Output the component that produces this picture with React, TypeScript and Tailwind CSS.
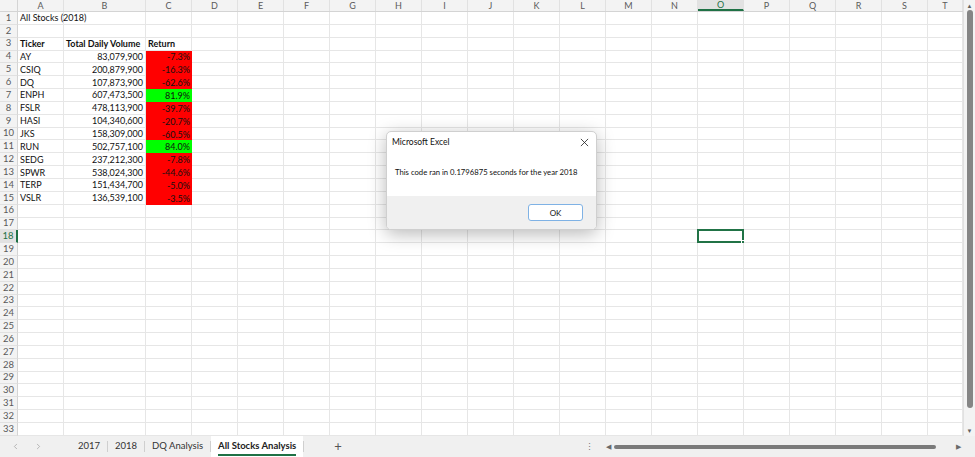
import React from 'react';
import { ChevronLeft, ChevronRight } from 'lucide-react';

const COLS = ['A', 'B', 'C', 'D', 'E', 'F', 'G', 'H', 'I', 'J', 'K', 'L', 'M', 'N', 'O', 'P', 'Q', 'R', 'S', 'T'];

const colWidth = (c: string) => {
  if (c === 'B') return 'w-[82px]';
  if (c === 'T') return 'w-[35px]';
  return 'w-[46px]';
};

type Stock = { ticker: string; volume: string; ret: string; up: boolean };

const STOCKS: Stock[] = [
  { ticker: 'AY', volume: '83,079,900', ret: '-7.3%', up: false },
  { ticker: 'CSIQ', volume: '200,879,900', ret: '-16.3%', up: false },
  { ticker: 'DQ', volume: '107,873,900', ret: '-62.6%', up: false },
  { ticker: 'ENPH', volume: '607,473,500', ret: '81.9%', up: true },
  { ticker: 'FSLR', volume: '478,113,900', ret: '-39.7%', up: false },
  { ticker: 'HASI', volume: '104,340,600', ret: '-20.7%', up: false },
  { ticker: 'JKS', volume: '158,309,000', ret: '-60.5%', up: false },
  { ticker: 'RUN', volume: '502,757,100', ret: '84.0%', up: true },
  { ticker: 'SEDG', volume: '237,212,300', ret: '-7.8%', up: false },
  { ticker: 'SPWR', volume: '538,024,300', ret: '-44.6%', up: false },
  { ticker: 'TERP', volume: '151,434,700', ret: '-5.0%', up: false },
  { ticker: 'VSLR', volume: '136,539,100', ret: '-3.5%', up: false },
];

const ROWS = Array.from({ length: 33 }, (_, i) => i + 1);

function cellContent(row: number, col: string) {
  if (row === 1 && col === 'A') return { text: 'All Stocks (2018)', cls: 'overflow-visible whitespace-nowrap' };
  if (row === 3) {
    if (col === 'A') return { text: 'Ticker', cls: 'font-bold' };
    if (col === 'B') return { text: 'Total Daily Volume', cls: 'font-bold whitespace-nowrap' };
    if (col === 'C') return { text: 'Return', cls: 'font-bold' };
  }
  const s = STOCKS[row - 4];
  if (s) {
    if (col === 'A') return { text: s.ticker, cls: '' };
    if (col === 'B') return { text: s.volume, cls: 'justify-end' };
    if (col === 'C')
      return {
        text: s.ret,
        cls: s.up ? 'justify-end bg-[#00ff00]' : 'justify-end bg-[#ff0000]',
        fill: true,
      };
  }
  return null;
}

const ColumnHeader = () => (
  <div className="flex h-[12px] border-b border-[#d4d4d4] bg-[#f3f3f3]">
    <div className="w-[18px] shrink-0 border-r border-[#d4d4d4]" />
    {COLS.map((c) => (
      <div
        key={c}
        className={`${colWidth(c)} shrink-0 flex items-center justify-center border-r border-[#e1e1e1] text-[9px] ${
          c === 'O' ? 'bg-[#e2e2e2] text-[#1f7145] border-b-2 border-b-[#1f7145]' : 'text-[#5a5a5a]'
        }`}
      >
        {c}
      </div>
    ))}
  </div>
);

const Row = ({ row }: { row: number }) => (
  <div className="flex h-[12.85px]">
    <div
      className={`w-[18px] shrink-0 flex items-center justify-center text-[9.5px] border-b border-[#e1e1e1] ${
        row === 18
          ? 'bg-[#e2e2e2] text-[#1f7145] border-r-2 border-r-[#1f7145]'
          : 'bg-[#f3f3f3] text-[#5a5a5a] border-r border-r-[#d4d4d4]'
      }`}
    >
      {row}
    </div>
    {COLS.map((c) => {
      const content = cellContent(row, c);
      const fill = content && 'fill' in content;
      return (
        <div
          key={c}
          className={`${colWidth(c)} shrink-0 relative flex items-center px-[2px] text-[9px] leading-none text-[#111] ${
            fill ? '' : 'border-r border-[#e6e6e6] border-b border-b-[#e6e6e6]'
          } ${content?.cls ?? ''}`}
        >
          {content?.text}
          {row === 18 && c === 'O' && (
            <div className="absolute -left-px -top-px w-[47px] h-[14px] border-2 border-[#217346]">
              <div className="absolute -right-[3px] -bottom-[3px] w-[4px] h-[4px] bg-[#217346] border border-white" />
            </div>
          )}
        </div>
      );
    })}
  </div>
);

const VerticalScrollbar = () => (
  <div className="w-[12px] shrink-0 flex flex-col items-center bg-[#f3f3f3] border-l border-[#e1e1e1]">
    <div className="h-[10px] flex items-center text-[6px] text-[#606060]">▲</div>
    <div className="w-[6px] h-[398px] rounded-full bg-[#858585]" />
    <div className="flex-1" />
    <div className="h-[12px] flex items-center text-[6px] text-[#606060]">▼</div>
  </div>
);

const Tab = ({ label, active }: { label: string; active?: boolean }) => (
  <div
    className={`h-full flex items-center px-[7px] text-[9.5px] ${
      active ? 'bg-white font-bold text-[#222]' : 'text-[#333]'
    }`}
  >
    <span className={active ? 'border-b-2 border-[#1f7145] pb-[1px] mt-[2px]' : ''}>{label}</span>
  </div>
);

const Sep = () => <div className="w-px h-[11px] bg-[#cfcfcf]" />;

const TabBar = () => (
  <div className="h-[21px] flex items-center bg-[#f0f0f0] text-[#333]">
    <div className="w-[71px] flex items-center gap-[14px] pl-[11px] text-[#909090]">
      <ChevronLeft size={9} strokeWidth={1.6} />
      <ChevronRight size={9} strokeWidth={1.6} />
    </div>
    <div className="h-full flex items-center">
      <Tab label="2017" />
      <Sep />
      <Tab label="2018" />
      <Sep />
      <Tab label="DQ Analysis" />
      <Sep />
      <Tab label="All Stocks Analysis" active />
      <Sep />
    </div>
    <div className="ml-[30px] text-[13px] text-[#555] leading-none">+</div>
    <div className="flex-1" />
    <div className="text-[9px] text-[#777] mr-[12px]">⋮</div>
    <div className="text-[7px] text-[#6a6a6a] mr-[3px]">◀</div>
    <div className="w-[322px] h-[4px] rounded-full bg-[#7a7a7a]" />
    <div className="w-[20px]" />
    <div className="text-[7px] text-[#6a6a6a] mr-[14px]">▶</div>
  </div>
);

const Dialog = () => (
  <div className="absolute left-[386px] top-[131px] w-[211px] h-[99px] flex flex-col bg-white rounded-[5px] border border-[#cfcfcf] shadow-[0_4px_18px_rgba(0,0,0,0.28)] overflow-hidden">
    <div className="flex items-center justify-between h-[18px] pl-[5px] pr-[6px] mt-[1px]">
      <span className="text-[8.5px] text-[#111]">Microsoft Excel</span>
      <svg width="9" height="9" viewBox="0 0 10 10" className="mr-[1px]">
        <path d="M1 1L9 9M9 1L1 9" stroke="#222" strokeWidth="0.9" fill="none" />
      </svg>
    </div>
    <div className="flex-1 flex items-center pl-[8px] pb-[2px] text-[7.7px] text-[#111]">
      This code ran in 0.1796875 seconds for the year 2018
    </div>
    <div className="h-[33px] bg-[#f0f0f0] flex items-center justify-end pr-[13px]">
      <div className="w-[55px] h-[17px] flex items-center justify-center bg-white border border-[#7fb2e5] rounded-[3px] text-[8px] text-[#111]">
        OK
      </div>
    </div>
  </div>
);

export default function App() {
  return (
    <div
      className="relative w-[975px] h-[457px] flex flex-col overflow-hidden bg-white"
      style={{ fontFamily: 'Lato, "Open Sans", sans-serif' }}
    >
      <div className="flex-1 flex min-h-0">
        <div className="flex-1 flex flex-col overflow-hidden">
          <ColumnHeader />
          {ROWS.map((r) => (
            <Row key={r} row={r} />
          ))}
        </div>
        <VerticalScrollbar />
      </div>
      <TabBar />
      <Dialog />
    </div>
  );
}
